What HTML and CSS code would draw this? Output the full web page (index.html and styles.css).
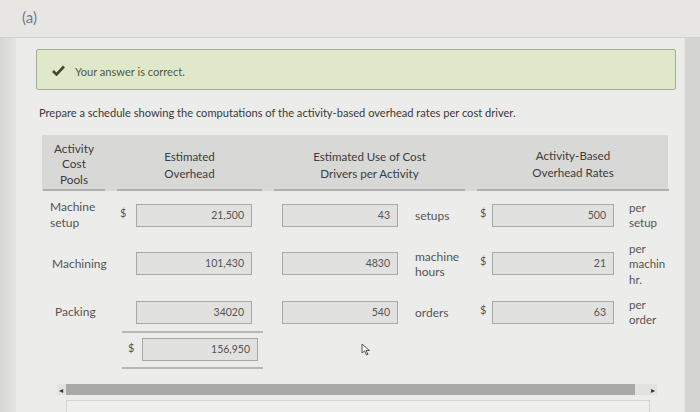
FILE: index.html
```html
<!DOCTYPE html>
<html>
<head>
<meta charset="utf-8">
<link rel="stylesheet" href="styles.css">
</head>
<body>
<div class="page">
  <div class="topbar"><span class="part">(a)</span></div>
  <div class="panel">
    <div class="notice">
      <svg class="check" width="13" height="11" viewBox="0 0 13 11"><path d="M1 6 L4.5 9.5 L12 1.5" fill="none" stroke="#3f4a3a" stroke-width="2.6"/></svg>
      <span>Your answer is correct.</span>
    </div>
    <p class="prompt">Prepare a schedule showing the computations of the activity-based overhead rates per cost driver.</p>

    <div class="table">
      <div class="thead">
        <div class="th th1">Activity<br>Cost<br>Pools</div>
        <div class="th th2">Estimated<br>Overhead</div>
        <div class="th th3">Estimated Use of Cost<br>Drivers per Activity</div>
        <div class="th th4">Activity-Based<br>Overhead Rates</div>
      </div>

      <div class="row r1">
        <div class="lbl">Machine<br>setup</div>
        <div class="dol">$</div>
        <div class="inp">21,500</div>
        <div></div>
        <div class="inp">43</div>
        <div class="unit">setups</div>
        <div class="dol">$</div>
        <div class="inp">500</div>
        <div class="per">per<br>setup</div>
      </div>

      <div class="row r2">
        <div class="lbl">Machining</div>
        <div class="dol"></div>
        <div class="inp">101,430</div>
        <div></div>
        <div class="inp">4830</div>
        <div class="unit">machine<br>hours</div>
        <div class="dol">$</div>
        <div class="inp">21</div>
        <div class="per">per<br>machin<br>hr.</div>
      </div>

      <div class="row r3">
        <div class="lbl">Packing</div>
        <div class="dol"></div>
        <div class="inp">34020</div>
        <div></div>
        <div class="inp">540</div>
        <div class="unit">orders</div>
        <div class="dol">$</div>
        <div class="inp">63</div>
        <div class="per">per<br>order</div>
      </div>

      <div class="total">
        <div class="dol">$</div>
        <div class="inp">156,950</div>
        <div class="cursor">
          <svg width="10" height="13" viewBox="0 0 10 13"><path d="M1 1 L1 10 L3.5 8 L5.5 12 L7 11.3 L5 7.5 L8.5 7.5 Z" fill="#f4f4f4" stroke="#555" stroke-width="1"/></svg>
        </div>
      </div>
    </div>

    <div class="scroll">
      <span class="arr">&#9666;</span>
      <div class="thumb"></div>
      <span class="arr">&#9656;</span>
    </div>
    <div class="nextbox"></div>
  </div>
</div>
</body>
</html>
```

FILE: styles.css
```css
* { box-sizing: border-box; }
html, body { margin: 0; padding: 0; }
body {
  width: 700px;
  height: 412px;
  overflow: hidden;
  background: #d9d9d7;
  font-family: Lato, "Open Sans", sans-serif;
  color: #4a4a4a;
  font-size: 12px;
}
.page {
  width: 700px;
  height: 412px;
  display: flex;
  flex-direction: column;
  background: linear-gradient(to right, #d6d6d4 0, #e4e4e2 16px, #e4e4e2 684px, #d4d4d2 686px);
}
.topbar {
  height: 38px;
  padding: 8px 0 0 22px;
  border-bottom: 1px solid #d2d2d0;
  background: #e7e6e3;
}
.part {
  font-size: 15px;
  color: #6a7a9a;
}
.panel {
  flex: 1;
  margin: 0 16px 0 16px;
  background: #ececea;
  padding: 11px 0 0 20px;
  position: relative;
}
.notice {
  width: 640px;
  height: 41px;
  background: #dfe8c9;
  border: 1px solid #a5ad96;
  border-radius: 2px;
  display: flex;
  align-items: center;
  padding: 4px 0 0 15px;
  gap: 10px;
  font-size: 11.1px;
  color: #4f5a45;
}
.check { margin-top: -3px; }
.prompt {
  margin: 16px 0 0 3px;
  font-size: 11.1px;
  color: #3a3a3a;
}
.table {
  margin: 16px 0 0 6px;
  width: 626px;
}
.thead {
  display: grid;
  grid-template-columns: 62px 145px 191px 192px;
  column-gap: 12px;
  background: #d8d8d6;
  height: 56px;
  padding-left: 1px;
}
.th {
  text-align: center;
  font-size: 11.6px;
  color: #3c3c3c;
  line-height: 16.5px;
  border-bottom: 2px solid #b0b0ae;
  display: flex;
  align-items: center;
  justify-content: center;
}
.th1 { padding-top: 4px; line-height: 15.5px; font-size: 11.8px; }
.th2 { padding-top: 7px; }
.th3 { padding-top: 7px; }
.th4 { padding-top: 5px; }
.row {
  display: grid;
  grid-template-columns: 73px 21px 116px 30px 116px 77px 17px 122px 54px;
  align-items: center;
  height: 48.5px;
}
.lbl {
  padding-left: 8px;
  line-height: 16px;
  color: #555;
}
.r2 .lbl { padding-left: 10px; }
.r3 .lbl { padding-left: 13px; }
.dol {
  padding-left: 5px;
  color: #555;
  font-size: 11px;
  margin-top: -6px;
}
.inp {
  height: 23px;
  background: #e1e1df;
  border: 1px solid #a8a8a6;
  text-align: right;
  padding-right: 7px;
  line-height: 21px;
  font-size: 10.5px;
  color: #555;
}
.unit {
  padding-left: 17px;
  line-height: 15px;
  color: #555;
}
.per {
  padding-left: 15px;
  line-height: 15.5px;
  color: #555;
  font-size: 11.5px;
}
.total {
  display: grid;
  grid-template-columns: 16px 116px;
  align-items: center;
  margin-top: -6px;
  border-top: 2px solid #b8b8b6;
  border-bottom: 2px solid #b8b8b6;
  width: 141px;
  margin-left: 80px;
  padding: 5px 0 6px 4px;
  position: relative;
}
.total .dol { padding-left: 2px; margin-top: -4px; }
.cursor {
  position: absolute;
  left: 239px;
  top: 10px;
}
.scroll {
  position: absolute;
  left: 41px;
  top: 346px;
  width: 600px;
  height: 11px;
  display: flex;
  align-items: center;
  background: #e2e2e0;
}
.arr {
  font-size: 8px;
  color: #333;
  width: 8px;
  text-align: center;
}
.thumb {
  flex: 1;
  height: 11px;
  background: #a9a9a7;
  margin: 0 14px 0 1px;
}
.nextbox {
  position: absolute;
  left: 50px;
  top: 362px;
  width: 584px;
  height: 20px;
  border: 1px solid #d2d2d0;
  background: #eeeeec;
}
```
